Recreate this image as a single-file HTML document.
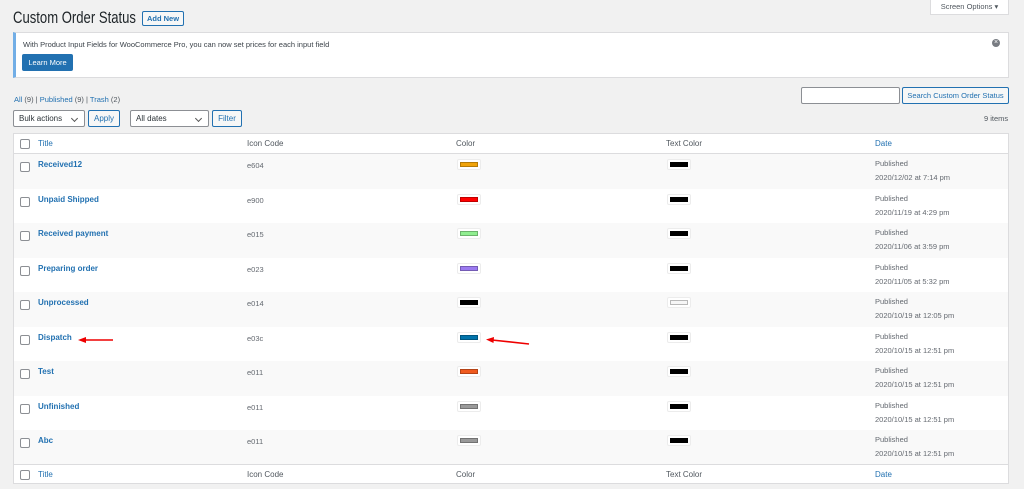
<!DOCTYPE html>
<html><head><meta charset="utf-8"><style>
*{box-sizing:border-box;margin:0;padding:0}
body{width:1024px;height:489px;background:#f1f1f1;font-family:"Liberation Sans",sans-serif;font-size:8px;color:#3c434a;position:relative;overflow:hidden}
.a{position:absolute}
.btn{position:absolute;border:1px solid #2271b1;color:#2271b1;background:#f6f7f7;border-radius:2px;font-size:8px;text-align:center}
.sel{position:absolute;border:1px solid #8c8f94;background:#fff;border-radius:2px;font-size:8px;color:#2c3338;padding-left:5px}
.sel:after{content:"";position:absolute;right:7px;top:5px;width:4px;height:4px;border-right:1px solid #555;border-bottom:1px solid #555;transform:rotate(45deg)}
.tbl{position:absolute;left:13px;top:133px;width:996px;height:351px;background:#fff;border:1px solid #dcdcde}
.row{position:absolute;left:0;width:994px;height:34.5px}
.row.s{background:#f9f9f9}
.cb{position:absolute;left:6px;width:10px;height:10px;border:1px solid #8c8f94;border-radius:2px;background:#fff}
.t{position:absolute;left:24px;color:#2271b1;font-weight:bold;font-size:8px}
.ic{position:absolute;left:233px;font-size:7.5px;color:#646970}
.sw{position:absolute;width:24px;height:11px;border:1px solid #ececec;border-radius:2px;background:#fff;padding:2px}
.sw i{display:block;width:100%;height:100%;border:1px solid rgba(0,0,0,.25)}
.d{position:absolute;left:861px;font-size:7.5px;color:#646970;line-height:14px}
.h{position:absolute;font-size:8px;color:#50575e}
</style></head><body>
<div class="a" style="left:13px;top:8px;font-size:17px;color:#1d2327;transform:scaleX(0.77);transform-origin:left top;white-space:nowrap">Custom Order Status</div>
<div class="btn" style="left:142px;top:11px;width:42px;height:15px;line-height:13px;font-weight:bold;font-size:7.5px">Add New</div>
<div class="a" style="left:930px;top:0;width:79px;height:15px;background:#fff;border:1px solid #dcdcde;border-top:none;font-size:7.5px;color:#50575e;line-height:14px;text-align:center">Screen Options ▾</div>
<div class="a" style="left:13px;top:32px;width:996px;height:46px;background:#fff;border:1px solid #dcdcde;border-left:3px solid #72aee6"></div>
<div class="a" style="left:23px;top:40px;font-size:7.5px;color:#3c434a">With Product Input Fields for WooCommerce Pro, you can now set prices for each input field</div>
<div class="a" style="left:22px;top:54px;width:51px;height:17px;background:#2271b1;color:#fff;border-radius:2px;font-size:7.5px;text-align:center;line-height:17px">Learn More</div>
<div class="a" style="left:992px;top:39px;width:8px;height:8px;border-radius:50%;background:#787c82;color:#fff;font-size:7px;line-height:8px;text-align:center">×</div>
<div class="a" style="left:14px;top:95px;font-size:7.5px;color:#50575e"><span style="color:#2271b1">All</span> (9) | <span style="color:#2271b1">Published</span> (9) | <span style="color:#2271b1">Trash</span> (2)</div>
<div class="sel" style="left:13px;top:110px;width:72px;height:17px;line-height:15px">Bulk actions</div>
<div class="btn" style="left:88px;top:110px;width:32px;height:17px;line-height:15px">Apply</div>
<div class="sel" style="left:130px;top:110px;width:79px;height:17px;line-height:15px">All dates</div>
<div class="btn" style="left:212px;top:110px;width:30px;height:17px;line-height:15px">Filter</div>
<div class="a" style="left:801px;top:87px;width:99px;height:17px;background:#fff;border:1px solid #8c8f94;border-radius:2px"></div>
<div class="btn" style="left:902px;top:87px;width:107px;height:17px;line-height:15px;font-size:7.5px">Search Custom Order Status</div>
<div class="a" style="left:984px;top:114px;font-size:7.5px;color:#50575e">9 items</div>
<div class="tbl">
<div class="row" style="top:0;height:20px;border-bottom:1px solid #dcdcde"><div class="cb" style="top:5px"></div><div class="h" style="left:24px;top:5px;color:#2271b1">Title</div><div class="h" style="left:233px;top:5px">Icon Code</div><div class="h" style="left:442px;top:5px">Color</div><div class="h" style="left:652px;top:5px">Text Color</div><div class="h" style="left:861px;top:5px;color:#2271b1">Date</div></div>
<div class="row s" style="top:20px"><div class="cb" style="top:8px"></div><div class="t" style="top:6px">Received12</div><div class="ic" style="top:7px">e604</div><div class="sw" style="left:443px;top:5px"><i style="background:#f0a30a"></i></div><div class="sw" style="left:653px;top:5px"><i style="background:#000"></i></div><div class="d" style="top:3px">Published<br>2020/12/02 at 7:14 pm</div></div>
<div class="row" style="top:54.5px"><div class="cb" style="top:8px"></div><div class="t" style="top:6px">Unpaid Shipped</div><div class="ic" style="top:7px">e900</div><div class="sw" style="left:443px;top:5px"><i style="background:#f00"></i></div><div class="sw" style="left:653px;top:5px"><i style="background:#000"></i></div><div class="d" style="top:3px">Published<br>2020/11/19 at 4:29 pm</div></div>
<div class="row s" style="top:89px"><div class="cb" style="top:8px"></div><div class="t" style="top:6px">Received payment</div><div class="ic" style="top:7px">e015</div><div class="sw" style="left:443px;top:5px"><i style="background:#90ee90"></i></div><div class="sw" style="left:653px;top:5px"><i style="background:#000"></i></div><div class="d" style="top:3px">Published<br>2020/11/06 at 3:59 pm</div></div>
<div class="row" style="top:123.5px"><div class="cb" style="top:8px"></div><div class="t" style="top:6px">Preparing order</div><div class="ic" style="top:7px">e023</div><div class="sw" style="left:443px;top:5px"><i style="background:#9b7af0"></i></div><div class="sw" style="left:653px;top:5px"><i style="background:#000"></i></div><div class="d" style="top:3px">Published<br>2020/11/05 at 5:32 pm</div></div>
<div class="row s" style="top:158px"><div class="cb" style="top:8px"></div><div class="t" style="top:6px">Unprocessed</div><div class="ic" style="top:7px">e014</div><div class="sw" style="left:443px;top:5px"><i style="background:#000"></i></div><div class="sw" style="left:653px;top:5px"><i style="background:#f6f6f6"></i></div><div class="d" style="top:3px">Published<br>2020/10/19 at 12:05 pm</div></div>
<div class="row" style="top:192.5px"><div class="cb" style="top:8px"></div><div class="t" style="top:6px">Dispatch</div><div class="ic" style="top:7px">e03c</div><div class="sw" style="left:443px;top:5px"><i style="background:#0073aa"></i></div><div class="sw" style="left:653px;top:5px"><i style="background:#000"></i></div><div class="d" style="top:3px">Published<br>2020/10/15 at 12:51 pm</div></div>
<div class="row s" style="top:227px"><div class="cb" style="top:8px"></div><div class="t" style="top:6px">Test</div><div class="ic" style="top:7px">e011</div><div class="sw" style="left:443px;top:5px"><i style="background:#f05a1e"></i></div><div class="sw" style="left:653px;top:5px"><i style="background:#000"></i></div><div class="d" style="top:3px">Published<br>2020/10/15 at 12:51 pm</div></div>
<div class="row" style="top:261.5px"><div class="cb" style="top:8px"></div><div class="t" style="top:6px">Unfinished</div><div class="ic" style="top:7px">e011</div><div class="sw" style="left:443px;top:5px"><i style="background:#999"></i></div><div class="sw" style="left:653px;top:5px"><i style="background:#000"></i></div><div class="d" style="top:3px">Published<br>2020/10/15 at 12:51 pm</div></div>
<div class="row s" style="top:296px"><div class="cb" style="top:8px"></div><div class="t" style="top:6px">Abc</div><div class="ic" style="top:7px">e011</div><div class="sw" style="left:443px;top:5px"><i style="background:#999"></i></div><div class="sw" style="left:653px;top:5px"><i style="background:#000"></i></div><div class="d" style="top:3px">Published<br>2020/10/15 at 12:51 pm</div></div>
<div class="row" style="top:330px;height:20px;border-top:1px solid #dcdcde"><div class="cb" style="top:5px"></div><div class="h" style="left:24px;top:5px;color:#2271b1">Title</div><div class="h" style="left:233px;top:5px">Icon Code</div><div class="h" style="left:442px;top:5px">Color</div><div class="h" style="left:652px;top:5px">Text Color</div><div class="h" style="left:861px;top:5px;color:#2271b1">Date</div></div>
</div>
<svg class="a" style="left:0;top:0" width="1024" height="489">
<line x1="113" y1="340" x2="84" y2="340" stroke="#e00" stroke-width="1.6"/><polygon points="78,340 86,337 86,343" fill="#e00"/>
<line x1="529" y1="344" x2="492" y2="340" stroke="#e00" stroke-width="1.6"/><polygon points="486,339.5 494,337 493.5,343" fill="#e00"/>
</svg>
</body></html>
